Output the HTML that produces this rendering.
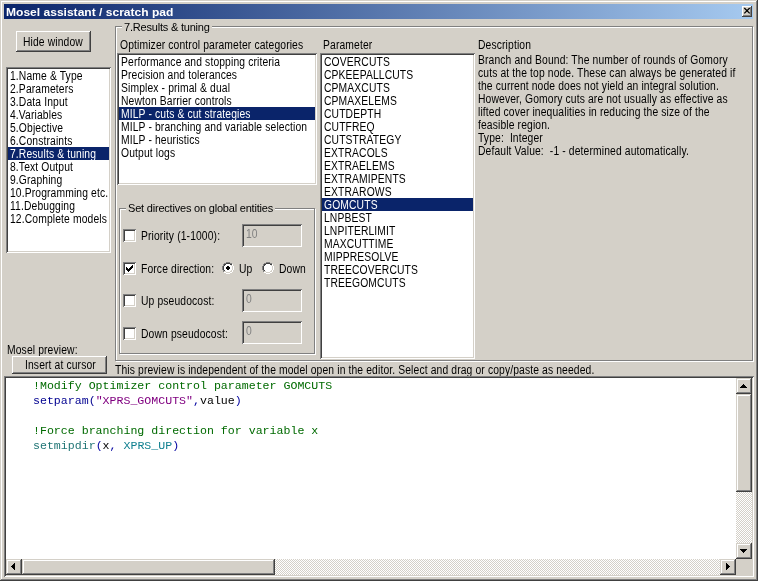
<!DOCTYPE html>
<html><head><meta charset="utf-8">
<style>
*{box-sizing:border-box;margin:0;padding:0}
html,body{width:758px;height:581px;overflow:hidden;background:#d4d0c8}
#root{position:absolute;left:0;top:0;width:758px;height:581px;will-change:transform}
body{position:relative;-webkit-font-smoothing:antialiased;font-family:"Liberation Sans",sans-serif;font-size:11px;color:#000;letter-spacing:-0.2px}
.a{position:absolute}
.t{position:absolute;white-space:pre;line-height:13px;font-size:12px;letter-spacing:0.15px;transform:translateY(1px) scaleX(0.86);transform-origin:0 0}
.raised{background:#d4d0c8;box-shadow:inset -1px -1px #404040,inset 1px 1px #fff,inset -2px -2px #808080,inset 2px 2px #d4d0c8}
.sbtn{background:#d4d0c8;box-shadow:inset -1px -1px #404040,inset 1px 1px #d4d0c8,inset -2px -2px #808080,inset 2px 2px #fff}
.sunken{background:#fff;box-shadow:inset 1px 1px #808080,inset -1px -1px #fff,inset 2px 2px #404040,inset -2px -2px #d4d0c8}
.group{position:absolute;border:1px solid #808080;box-shadow:inset 1px 1px #fff,1px 1px #fff}
.glabel{position:absolute;background:#d4d0c8;padding:0 2px;line-height:13px;white-space:pre}
.sel{background:#0a246a;color:#fff}
.list .t{left:3px}
.code{font-family:"Liberation Mono",monospace;font-size:11.6px;letter-spacing:0;line-height:15px;white-space:pre}
</style></head><body><div id="root">
<!-- window frame -->
<div class="a" style="left:0;top:0;width:758px;height:581px;box-shadow:inset -1px -1px #404040,inset 1px 1px #d4d0c8,inset -2px -2px #808080,inset 2px 2px #fff"></div>
<!-- title bar -->
<div class="a" style="left:4px;top:4px;width:749px;height:15px;background:linear-gradient(to right,#0a246a,#a6caf0)"></div>
<div class="t" style="left:6px;top:6px;color:#fff;font-weight:bold;font-size:11px;letter-spacing:0;transform:scaleX(1.095)">Mosel assistant / scratch pad</div>
<div class="a raised" style="left:742px;top:6px;width:10px;height:11px"><svg class="a" style="left:1px;top:0px" width="9" height="9"><path d="M1.3 2L6.7 7.4M6.7 2L1.3 7.4" stroke="#000" stroke-width="1.3"/></svg></div>

<!-- Hide window button -->
<div class="a raised" style="left:16px;top:31px;width:75px;height:21px"></div>
<div class="t" style="left:23px;top:35px">Hide window</div>

<!-- left step list -->
<div class="a sunken list" style="left:6px;top:67px;width:105px;height:186px">
<div class="a" style="left:2px;top:2px;width:101px;height:13px"><div class="t" style="left:2px;top:0">1.Name &amp; Type</div></div>
<div class="a" style="left:2px;top:15px;width:101px;height:13px"><div class="t" style="left:2px;top:0">2.Parameters</div></div>
<div class="a" style="left:2px;top:28px;width:101px;height:13px"><div class="t" style="left:2px;top:0">3.Data Input</div></div>
<div class="a" style="left:2px;top:41px;width:101px;height:13px"><div class="t" style="left:2px;top:0">4.Variables</div></div>
<div class="a" style="left:2px;top:54px;width:101px;height:13px"><div class="t" style="left:2px;top:0">5.Objective</div></div>
<div class="a" style="left:2px;top:67px;width:101px;height:13px"><div class="t" style="left:2px;top:0">6.Constraints</div></div>
<div class="a sel" style="left:2px;top:80px;width:101px;height:13px"><div class="t" style="left:2px;top:0">7.Results &amp; tuning</div></div>
<div class="a" style="left:2px;top:93px;width:101px;height:13px"><div class="t" style="left:2px;top:0">8.Text Output</div></div>
<div class="a" style="left:2px;top:106px;width:101px;height:13px"><div class="t" style="left:2px;top:0">9.Graphing</div></div>
<div class="a" style="left:2px;top:119px;width:101px;height:13px"><div class="t" style="left:2px;top:0">10.Programming etc.</div></div>
<div class="a" style="left:2px;top:132px;width:101px;height:13px"><div class="t" style="left:2px;top:0">11.Debugging</div></div>
<div class="a" style="left:2px;top:145px;width:101px;height:13px"><div class="t" style="left:2px;top:0">12.Complete models</div></div>
</div>

<!-- main groupbox -->
<div class="group" style="left:115px;top:26px;width:638px;height:335px"></div>
<div class="glabel" style="left:122px;top:21px">7.Results &amp; tuning</div>

<div class="t" style="left:120px;top:38px">Optimizer control parameter categories</div>
<div class="a sunken list" style="left:117px;top:53px;width:200px;height:132px">
<div class="a" style="left:2px;top:2px;width:196px;height:13px"><div class="t" style="left:2px;top:0">Performance and stopping criteria</div></div>
<div class="a" style="left:2px;top:15px;width:196px;height:13px"><div class="t" style="left:2px;top:0">Precision and tolerances</div></div>
<div class="a" style="left:2px;top:28px;width:196px;height:13px"><div class="t" style="left:2px;top:0">Simplex - primal &amp; dual</div></div>
<div class="a" style="left:2px;top:41px;width:196px;height:13px"><div class="t" style="left:2px;top:0">Newton Barrier controls</div></div>
<div class="a sel" style="left:2px;top:54px;width:196px;height:13px"><div class="t" style="left:2px;top:0">MILP - cuts &amp; cut strategies</div></div>
<div class="a" style="left:2px;top:67px;width:196px;height:13px"><div class="t" style="left:2px;top:0">MILP - branching and variable selection</div></div>
<div class="a" style="left:2px;top:80px;width:196px;height:13px"><div class="t" style="left:2px;top:0">MILP - heuristics</div></div>
<div class="a" style="left:2px;top:93px;width:196px;height:13px"><div class="t" style="left:2px;top:0">Output logs</div></div>
</div>

<div class="group" style="left:119px;top:208px;width:196px;height:146px"></div>
<div class="glabel" style="left:126px;top:202px">Set directives on global entities</div>
<div class="a sunken" style="left:123px;top:229px;width:13px;height:13px"></div>
<div class="t" style="left:141px;top:229px">Priority (1-1000):</div>
<div class="a" style="left:242px;top:224px;width:60px;height:23px;background:#d4d0c8;box-shadow:inset 1px 1px #808080,inset -1px -1px #fff,inset 2px 2px #404040,inset -2px -2px #d4d0c8"></div><div class="t" style="left:246px;top:227px;color:#808080">10</div>
<div class="a sunken" style="left:123px;top:262px;width:13px;height:13px"><svg class="a" style="left:3px;top:3px" width="7" height="7" fill="#000"><rect x="6" y="0" width="1" height="1"/><rect x="5" y="1" width="1" height="1"/><rect x="6" y="1" width="1" height="1"/><rect x="0" y="2" width="1" height="1"/><rect x="4" y="2" width="1" height="1"/><rect x="5" y="2" width="1" height="1"/><rect x="6" y="2" width="1" height="1"/><rect x="0" y="3" width="1" height="1"/><rect x="1" y="3" width="1" height="1"/><rect x="3" y="3" width="1" height="1"/><rect x="4" y="3" width="1" height="1"/><rect x="5" y="3" width="1" height="1"/><rect x="0" y="4" width="1" height="1"/><rect x="1" y="4" width="1" height="1"/><rect x="2" y="4" width="1" height="1"/><rect x="3" y="4" width="1" height="1"/><rect x="4" y="4" width="1" height="1"/><rect x="1" y="5" width="1" height="1"/><rect x="2" y="5" width="1" height="1"/><rect x="3" y="5" width="1" height="1"/><rect x="2" y="6" width="1" height="1"/></svg></div>
<div class="t" style="left:141px;top:262px">Force direction:</div>
<svg class="a" style="left:222px;top:262px;shape-rendering:crispEdges" width="12" height="12"><rect x="4" y="0" width="1" height="1" fill="#808080"/><rect x="5" y="0" width="1" height="1" fill="#808080"/><rect x="6" y="0" width="1" height="1" fill="#808080"/><rect x="7" y="0" width="1" height="1" fill="#808080"/><rect x="2" y="1" width="1" height="1" fill="#808080"/><rect x="3" y="1" width="1" height="1" fill="#808080"/><rect x="4" y="1" width="1" height="1" fill="#404040"/><rect x="5" y="1" width="1" height="1" fill="#404040"/><rect x="6" y="1" width="1" height="1" fill="#404040"/><rect x="7" y="1" width="1" height="1" fill="#404040"/><rect x="8" y="1" width="1" height="1" fill="#808080"/><rect x="9" y="1" width="1" height="1" fill="#808080"/><rect x="1" y="2" width="1" height="1" fill="#808080"/><rect x="2" y="2" width="1" height="1" fill="#404040"/><rect x="3" y="2" width="1" height="1" fill="#404040"/><rect x="4" y="2" width="1" height="1" fill="#ffffff"/><rect x="5" y="2" width="1" height="1" fill="#ffffff"/><rect x="6" y="2" width="1" height="1" fill="#ffffff"/><rect x="7" y="2" width="1" height="1" fill="#ffffff"/><rect x="8" y="2" width="1" height="1" fill="#404040"/><rect x="9" y="2" width="1" height="1" fill="#404040"/><rect x="10" y="2" width="1" height="1" fill="#ffffff"/><rect x="1" y="3" width="1" height="1" fill="#808080"/><rect x="2" y="3" width="1" height="1" fill="#404040"/><rect x="3" y="3" width="1" height="1" fill="#ffffff"/><rect x="4" y="3" width="1" height="1" fill="#ffffff"/><rect x="5" y="3" width="1" height="1" fill="#ffffff"/><rect x="6" y="3" width="1" height="1" fill="#ffffff"/><rect x="7" y="3" width="1" height="1" fill="#ffffff"/><rect x="8" y="3" width="1" height="1" fill="#ffffff"/><rect x="9" y="3" width="1" height="1" fill="#d4d0c8"/><rect x="10" y="3" width="1" height="1" fill="#ffffff"/><rect x="0" y="4" width="1" height="1" fill="#808080"/><rect x="1" y="4" width="1" height="1" fill="#404040"/><rect x="2" y="4" width="1" height="1" fill="#ffffff"/><rect x="3" y="4" width="1" height="1" fill="#ffffff"/><rect x="4" y="4" width="1" height="1" fill="#ffffff"/><rect x="5" y="4" width="1" height="1" fill="#000"/><rect x="6" y="4" width="1" height="1" fill="#000"/><rect x="7" y="4" width="1" height="1" fill="#ffffff"/><rect x="8" y="4" width="1" height="1" fill="#ffffff"/><rect x="9" y="4" width="1" height="1" fill="#ffffff"/><rect x="10" y="4" width="1" height="1" fill="#d4d0c8"/><rect x="11" y="4" width="1" height="1" fill="#ffffff"/><rect x="0" y="5" width="1" height="1" fill="#808080"/><rect x="1" y="5" width="1" height="1" fill="#404040"/><rect x="2" y="5" width="1" height="1" fill="#ffffff"/><rect x="3" y="5" width="1" height="1" fill="#ffffff"/><rect x="4" y="5" width="1" height="1" fill="#000"/><rect x="5" y="5" width="1" height="1" fill="#000"/><rect x="6" y="5" width="1" height="1" fill="#000"/><rect x="7" y="5" width="1" height="1" fill="#000"/><rect x="8" y="5" width="1" height="1" fill="#ffffff"/><rect x="9" y="5" width="1" height="1" fill="#ffffff"/><rect x="10" y="5" width="1" height="1" fill="#d4d0c8"/><rect x="11" y="5" width="1" height="1" fill="#ffffff"/><rect x="0" y="6" width="1" height="1" fill="#808080"/><rect x="1" y="6" width="1" height="1" fill="#404040"/><rect x="2" y="6" width="1" height="1" fill="#ffffff"/><rect x="3" y="6" width="1" height="1" fill="#ffffff"/><rect x="4" y="6" width="1" height="1" fill="#000"/><rect x="5" y="6" width="1" height="1" fill="#000"/><rect x="6" y="6" width="1" height="1" fill="#000"/><rect x="7" y="6" width="1" height="1" fill="#000"/><rect x="8" y="6" width="1" height="1" fill="#ffffff"/><rect x="9" y="6" width="1" height="1" fill="#ffffff"/><rect x="10" y="6" width="1" height="1" fill="#d4d0c8"/><rect x="11" y="6" width="1" height="1" fill="#ffffff"/><rect x="0" y="7" width="1" height="1" fill="#808080"/><rect x="1" y="7" width="1" height="1" fill="#404040"/><rect x="2" y="7" width="1" height="1" fill="#ffffff"/><rect x="3" y="7" width="1" height="1" fill="#ffffff"/><rect x="4" y="7" width="1" height="1" fill="#ffffff"/><rect x="5" y="7" width="1" height="1" fill="#000"/><rect x="6" y="7" width="1" height="1" fill="#000"/><rect x="7" y="7" width="1" height="1" fill="#ffffff"/><rect x="8" y="7" width="1" height="1" fill="#ffffff"/><rect x="9" y="7" width="1" height="1" fill="#ffffff"/><rect x="10" y="7" width="1" height="1" fill="#d4d0c8"/><rect x="11" y="7" width="1" height="1" fill="#ffffff"/><rect x="1" y="8" width="1" height="1" fill="#808080"/><rect x="2" y="8" width="1" height="1" fill="#404040"/><rect x="3" y="8" width="1" height="1" fill="#ffffff"/><rect x="4" y="8" width="1" height="1" fill="#ffffff"/><rect x="5" y="8" width="1" height="1" fill="#ffffff"/><rect x="6" y="8" width="1" height="1" fill="#ffffff"/><rect x="7" y="8" width="1" height="1" fill="#ffffff"/><rect x="8" y="8" width="1" height="1" fill="#ffffff"/><rect x="9" y="8" width="1" height="1" fill="#d4d0c8"/><rect x="10" y="8" width="1" height="1" fill="#ffffff"/><rect x="1" y="9" width="1" height="1" fill="#808080"/><rect x="2" y="9" width="1" height="1" fill="#d4d0c8"/><rect x="3" y="9" width="1" height="1" fill="#d4d0c8"/><rect x="4" y="9" width="1" height="1" fill="#ffffff"/><rect x="5" y="9" width="1" height="1" fill="#ffffff"/><rect x="6" y="9" width="1" height="1" fill="#ffffff"/><rect x="7" y="9" width="1" height="1" fill="#ffffff"/><rect x="8" y="9" width="1" height="1" fill="#d4d0c8"/><rect x="9" y="9" width="1" height="1" fill="#d4d0c8"/><rect x="10" y="9" width="1" height="1" fill="#ffffff"/><rect x="2" y="10" width="1" height="1" fill="#ffffff"/><rect x="3" y="10" width="1" height="1" fill="#ffffff"/><rect x="4" y="10" width="1" height="1" fill="#d4d0c8"/><rect x="5" y="10" width="1" height="1" fill="#d4d0c8"/><rect x="6" y="10" width="1" height="1" fill="#d4d0c8"/><rect x="7" y="10" width="1" height="1" fill="#d4d0c8"/><rect x="8" y="10" width="1" height="1" fill="#ffffff"/><rect x="9" y="10" width="1" height="1" fill="#ffffff"/><rect x="4" y="11" width="1" height="1" fill="#ffffff"/><rect x="5" y="11" width="1" height="1" fill="#ffffff"/><rect x="6" y="11" width="1" height="1" fill="#ffffff"/><rect x="7" y="11" width="1" height="1" fill="#ffffff"/></svg>
<div class="t" style="left:239px;top:262px">Up</div>
<svg class="a" style="left:262px;top:262px;shape-rendering:crispEdges" width="12" height="12"><rect x="4" y="0" width="1" height="1" fill="#808080"/><rect x="5" y="0" width="1" height="1" fill="#808080"/><rect x="6" y="0" width="1" height="1" fill="#808080"/><rect x="7" y="0" width="1" height="1" fill="#808080"/><rect x="2" y="1" width="1" height="1" fill="#808080"/><rect x="3" y="1" width="1" height="1" fill="#808080"/><rect x="4" y="1" width="1" height="1" fill="#404040"/><rect x="5" y="1" width="1" height="1" fill="#404040"/><rect x="6" y="1" width="1" height="1" fill="#404040"/><rect x="7" y="1" width="1" height="1" fill="#404040"/><rect x="8" y="1" width="1" height="1" fill="#808080"/><rect x="9" y="1" width="1" height="1" fill="#808080"/><rect x="1" y="2" width="1" height="1" fill="#808080"/><rect x="2" y="2" width="1" height="1" fill="#404040"/><rect x="3" y="2" width="1" height="1" fill="#404040"/><rect x="4" y="2" width="1" height="1" fill="#ffffff"/><rect x="5" y="2" width="1" height="1" fill="#ffffff"/><rect x="6" y="2" width="1" height="1" fill="#ffffff"/><rect x="7" y="2" width="1" height="1" fill="#ffffff"/><rect x="8" y="2" width="1" height="1" fill="#404040"/><rect x="9" y="2" width="1" height="1" fill="#404040"/><rect x="10" y="2" width="1" height="1" fill="#ffffff"/><rect x="1" y="3" width="1" height="1" fill="#808080"/><rect x="2" y="3" width="1" height="1" fill="#404040"/><rect x="3" y="3" width="1" height="1" fill="#ffffff"/><rect x="4" y="3" width="1" height="1" fill="#ffffff"/><rect x="5" y="3" width="1" height="1" fill="#ffffff"/><rect x="6" y="3" width="1" height="1" fill="#ffffff"/><rect x="7" y="3" width="1" height="1" fill="#ffffff"/><rect x="8" y="3" width="1" height="1" fill="#ffffff"/><rect x="9" y="3" width="1" height="1" fill="#d4d0c8"/><rect x="10" y="3" width="1" height="1" fill="#ffffff"/><rect x="0" y="4" width="1" height="1" fill="#808080"/><rect x="1" y="4" width="1" height="1" fill="#404040"/><rect x="2" y="4" width="1" height="1" fill="#ffffff"/><rect x="3" y="4" width="1" height="1" fill="#ffffff"/><rect x="4" y="4" width="1" height="1" fill="#ffffff"/><rect x="5" y="4" width="1" height="1" fill="#ffffff"/><rect x="6" y="4" width="1" height="1" fill="#ffffff"/><rect x="7" y="4" width="1" height="1" fill="#ffffff"/><rect x="8" y="4" width="1" height="1" fill="#ffffff"/><rect x="9" y="4" width="1" height="1" fill="#ffffff"/><rect x="10" y="4" width="1" height="1" fill="#d4d0c8"/><rect x="11" y="4" width="1" height="1" fill="#ffffff"/><rect x="0" y="5" width="1" height="1" fill="#808080"/><rect x="1" y="5" width="1" height="1" fill="#404040"/><rect x="2" y="5" width="1" height="1" fill="#ffffff"/><rect x="3" y="5" width="1" height="1" fill="#ffffff"/><rect x="4" y="5" width="1" height="1" fill="#ffffff"/><rect x="5" y="5" width="1" height="1" fill="#ffffff"/><rect x="6" y="5" width="1" height="1" fill="#ffffff"/><rect x="7" y="5" width="1" height="1" fill="#ffffff"/><rect x="8" y="5" width="1" height="1" fill="#ffffff"/><rect x="9" y="5" width="1" height="1" fill="#ffffff"/><rect x="10" y="5" width="1" height="1" fill="#d4d0c8"/><rect x="11" y="5" width="1" height="1" fill="#ffffff"/><rect x="0" y="6" width="1" height="1" fill="#808080"/><rect x="1" y="6" width="1" height="1" fill="#404040"/><rect x="2" y="6" width="1" height="1" fill="#ffffff"/><rect x="3" y="6" width="1" height="1" fill="#ffffff"/><rect x="4" y="6" width="1" height="1" fill="#ffffff"/><rect x="5" y="6" width="1" height="1" fill="#ffffff"/><rect x="6" y="6" width="1" height="1" fill="#ffffff"/><rect x="7" y="6" width="1" height="1" fill="#ffffff"/><rect x="8" y="6" width="1" height="1" fill="#ffffff"/><rect x="9" y="6" width="1" height="1" fill="#ffffff"/><rect x="10" y="6" width="1" height="1" fill="#d4d0c8"/><rect x="11" y="6" width="1" height="1" fill="#ffffff"/><rect x="0" y="7" width="1" height="1" fill="#808080"/><rect x="1" y="7" width="1" height="1" fill="#404040"/><rect x="2" y="7" width="1" height="1" fill="#ffffff"/><rect x="3" y="7" width="1" height="1" fill="#ffffff"/><rect x="4" y="7" width="1" height="1" fill="#ffffff"/><rect x="5" y="7" width="1" height="1" fill="#ffffff"/><rect x="6" y="7" width="1" height="1" fill="#ffffff"/><rect x="7" y="7" width="1" height="1" fill="#ffffff"/><rect x="8" y="7" width="1" height="1" fill="#ffffff"/><rect x="9" y="7" width="1" height="1" fill="#ffffff"/><rect x="10" y="7" width="1" height="1" fill="#d4d0c8"/><rect x="11" y="7" width="1" height="1" fill="#ffffff"/><rect x="1" y="8" width="1" height="1" fill="#808080"/><rect x="2" y="8" width="1" height="1" fill="#404040"/><rect x="3" y="8" width="1" height="1" fill="#ffffff"/><rect x="4" y="8" width="1" height="1" fill="#ffffff"/><rect x="5" y="8" width="1" height="1" fill="#ffffff"/><rect x="6" y="8" width="1" height="1" fill="#ffffff"/><rect x="7" y="8" width="1" height="1" fill="#ffffff"/><rect x="8" y="8" width="1" height="1" fill="#ffffff"/><rect x="9" y="8" width="1" height="1" fill="#d4d0c8"/><rect x="10" y="8" width="1" height="1" fill="#ffffff"/><rect x="1" y="9" width="1" height="1" fill="#808080"/><rect x="2" y="9" width="1" height="1" fill="#d4d0c8"/><rect x="3" y="9" width="1" height="1" fill="#d4d0c8"/><rect x="4" y="9" width="1" height="1" fill="#ffffff"/><rect x="5" y="9" width="1" height="1" fill="#ffffff"/><rect x="6" y="9" width="1" height="1" fill="#ffffff"/><rect x="7" y="9" width="1" height="1" fill="#ffffff"/><rect x="8" y="9" width="1" height="1" fill="#d4d0c8"/><rect x="9" y="9" width="1" height="1" fill="#d4d0c8"/><rect x="10" y="9" width="1" height="1" fill="#ffffff"/><rect x="2" y="10" width="1" height="1" fill="#ffffff"/><rect x="3" y="10" width="1" height="1" fill="#ffffff"/><rect x="4" y="10" width="1" height="1" fill="#d4d0c8"/><rect x="5" y="10" width="1" height="1" fill="#d4d0c8"/><rect x="6" y="10" width="1" height="1" fill="#d4d0c8"/><rect x="7" y="10" width="1" height="1" fill="#d4d0c8"/><rect x="8" y="10" width="1" height="1" fill="#ffffff"/><rect x="9" y="10" width="1" height="1" fill="#ffffff"/><rect x="4" y="11" width="1" height="1" fill="#ffffff"/><rect x="5" y="11" width="1" height="1" fill="#ffffff"/><rect x="6" y="11" width="1" height="1" fill="#ffffff"/><rect x="7" y="11" width="1" height="1" fill="#ffffff"/></svg>
<div class="t" style="left:279px;top:262px">Down</div>
<div class="a sunken" style="left:123px;top:294px;width:13px;height:13px"></div>
<div class="t" style="left:141px;top:294px">Up pseudocost:</div>
<div class="a" style="left:242px;top:289px;width:60px;height:23px;background:#d4d0c8;box-shadow:inset 1px 1px #808080,inset -1px -1px #fff,inset 2px 2px #404040,inset -2px -2px #d4d0c8"></div><div class="t" style="left:246px;top:292px;color:#808080">0</div>
<div class="a sunken" style="left:123px;top:327px;width:13px;height:13px"></div>
<div class="t" style="left:141px;top:327px">Down pseudocost:</div>
<div class="a" style="left:242px;top:321px;width:60px;height:23px;background:#d4d0c8;box-shadow:inset 1px 1px #808080,inset -1px -1px #fff,inset 2px 2px #404040,inset -2px -2px #d4d0c8"></div><div class="t" style="left:246px;top:324px;color:#808080">0</div>

<div class="t" style="left:323px;top:38px">Parameter</div>
<div class="a sunken list" style="left:320px;top:53px;width:155px;height:306px">
<div class="a" style="left:2px;top:2px;width:151px;height:13px"><div class="t" style="left:2px;top:0">COVERCUTS</div></div>
<div class="a" style="left:2px;top:15px;width:151px;height:13px"><div class="t" style="left:2px;top:0">CPKEEPALLCUTS</div></div>
<div class="a" style="left:2px;top:28px;width:151px;height:13px"><div class="t" style="left:2px;top:0">CPMAXCUTS</div></div>
<div class="a" style="left:2px;top:41px;width:151px;height:13px"><div class="t" style="left:2px;top:0">CPMAXELEMS</div></div>
<div class="a" style="left:2px;top:54px;width:151px;height:13px"><div class="t" style="left:2px;top:0">CUTDEPTH</div></div>
<div class="a" style="left:2px;top:67px;width:151px;height:13px"><div class="t" style="left:2px;top:0">CUTFREQ</div></div>
<div class="a" style="left:2px;top:80px;width:151px;height:13px"><div class="t" style="left:2px;top:0">CUTSTRATEGY</div></div>
<div class="a" style="left:2px;top:93px;width:151px;height:13px"><div class="t" style="left:2px;top:0">EXTRACOLS</div></div>
<div class="a" style="left:2px;top:106px;width:151px;height:13px"><div class="t" style="left:2px;top:0">EXTRAELEMS</div></div>
<div class="a" style="left:2px;top:119px;width:151px;height:13px"><div class="t" style="left:2px;top:0">EXTRAMIPENTS</div></div>
<div class="a" style="left:2px;top:132px;width:151px;height:13px"><div class="t" style="left:2px;top:0">EXTRAROWS</div></div>
<div class="a sel" style="left:2px;top:145px;width:151px;height:13px"><div class="t" style="left:2px;top:0">GOMCUTS</div></div>
<div class="a" style="left:2px;top:158px;width:151px;height:13px"><div class="t" style="left:2px;top:0">LNPBEST</div></div>
<div class="a" style="left:2px;top:171px;width:151px;height:13px"><div class="t" style="left:2px;top:0">LNPITERLIMIT</div></div>
<div class="a" style="left:2px;top:184px;width:151px;height:13px"><div class="t" style="left:2px;top:0">MAXCUTTIME</div></div>
<div class="a" style="left:2px;top:197px;width:151px;height:13px"><div class="t" style="left:2px;top:0">MIPPRESOLVE</div></div>
<div class="a" style="left:2px;top:210px;width:151px;height:13px"><div class="t" style="left:2px;top:0">TREECOVERCUTS</div></div>
<div class="a" style="left:2px;top:223px;width:151px;height:13px"><div class="t" style="left:2px;top:0">TREEGOMCUTS</div></div>
</div>

<div class="t" style="left:478px;top:38px">Description</div>
<div class="t" style="left:478px;top:53px">Branch and Bound: The number of rounds of Gomory
cuts at the top node. These can always be generated if
the current node does not yield an integral solution.
However, Gomory cuts are not usually as effective as
lifted cover inequalities in reducing the size of the
feasible region.
Type:  Integer
Default Value:  -1 - determined automatically.</div>

<!-- preview -->
<div class="t" style="left:7px;top:343px">Mosel preview:</div>
<div class="a raised" style="left:12px;top:356px;width:95px;height:18px"></div>
<div class="t" style="left:25px;top:358px">Insert at cursor</div>
<div class="t" style="left:115px;top:363px">This preview is independent of the model open in the editor. Select and drag or copy/paste as needed.</div>

<div class="a sunken" style="left:4px;top:376px;width:750px;height:201px"></div>
<div class="a code" style="left:33px;top:378px"><span style="color:#006a00">!Modify Optimizer control parameter GOMCUTS</span>
<span style="color:#000090">setparam(</span><span style="color:#800080">"XPRS_GOMCUTS"</span><span style="color:#0000a0">,</span>value<span style="color:#0000a0">)</span>

<span style="color:#006a00">!Force branching direction for variable x</span>
<span style="color:#207575">setmipdir</span><span style="color:#0000a0">(</span>x<span style="color:#0000a0">,</span> <span style="color:#108090">XPRS_UP</span><span style="color:#0000a0">)</span></div>
<!-- scrollbars -->
<div class="a" style="left:736px;top:378px;width:16px;height:181px;background:repeating-conic-gradient(#d4d0c8 0 25%,#fff 0 50%) 0 0/2px 2px"></div>
<div class="a sbtn" style="left:736px;top:378px;width:16px;height:16px"><svg class="a" style="left:4px;top:6px;shape-rendering:crispEdges" width="7" height="4"><path d="M3 0h1v1h1v1h1v1h1v1h-7v-1h1v-1h1v-1h1z"/></svg></div>
<div class="a sbtn" style="left:736px;top:394px;width:16px;height:98px"></div>
<div class="a sbtn" style="left:736px;top:543px;width:16px;height:16px"><svg class="a" style="left:4px;top:6px;shape-rendering:crispEdges" width="7" height="4"><path d="M0 0h7v1h-1v1h-1v1h-1v1h-1v-1h-1v-1h-1v-1h-1z"/></svg></div>
<div class="a" style="left:6px;top:559px;width:730px;height:16px;background:repeating-conic-gradient(#d4d0c8 0 25%,#fff 0 50%) 0 0/2px 2px"></div>
<div class="a sbtn" style="left:6px;top:559px;width:16px;height:16px"><svg class="a" style="left:5px;top:4px;shape-rendering:crispEdges" width="4" height="7"><path d="M3 0h1v7h-1v-1h-1v-1h-1v-1h-1v-1h1v-1h1v-1h1z"/></svg></div>
<div class="a sbtn" style="left:22px;top:559px;width:253px;height:16px"></div>
<div class="a sbtn" style="left:720px;top:559px;width:16px;height:16px"><svg class="a" style="left:6px;top:4px;shape-rendering:crispEdges" width="4" height="7"><path d="M0 0h1v1h1v1h1v1h1v1h-1v1h-1v1h-1v1h-1z"/></svg></div>
<div class="a" style="left:736px;top:559px;width:16px;height:16px;background:#d4d0c8"></div>
</div></body></html>
